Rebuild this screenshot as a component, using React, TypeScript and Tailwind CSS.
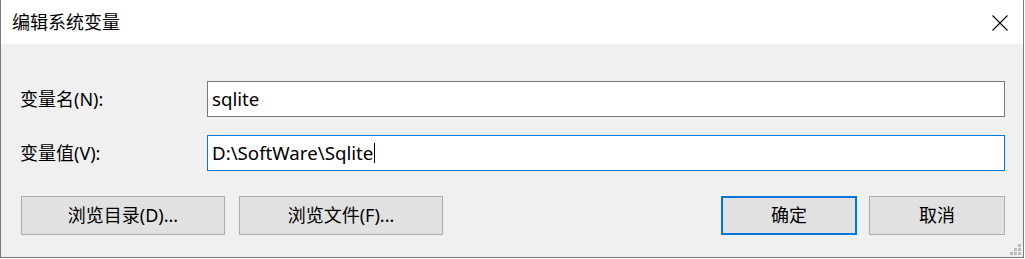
import React from "react";

const font = { fontFamily: '"Segoe UI", "Noto Sans", "Noto Sans CJK SC", sans-serif' };

function Field({ label, value, focused }: { label: string; value: string; focused?: boolean }) {
  return (
    <div className="flex items-center h-[36px]">
      <div className="w-[206px] pl-[19px] text-[18px] text-black leading-none">{label}</div>
      <div
        className={
          "flex-1 h-full bg-white border flex items-center pl-[4px] text-[18.7px] text-black " +
          (focused ? "border-[#0078d7]" : "border-[#7a7a7a]")
        }
      >
        <span className="leading-none">{value}</span>
        {focused ? <span className="w-px h-[20px] bg-black ml-px" /> : null}
      </div>
    </div>
  );
}

function Btn({ children, primary, w }: { children: React.ReactNode; primary?: boolean; w: string }) {
  return (
    <button
      className={
        "h-[39px] bg-[#e1e1e1] text-[18px] text-black flex items-center justify-center " +
        w +
        (primary ? " border-2 border-[#0078d7]" : " border border-[#adadad]")
      }
    >
      {children}
    </button>
  );
}

export default function App() {
  return (
    <div style={font} className="w-[1024px] h-[258px] bg-[#f0f0f0] border-x border-b border-[#7a7a7a] flex flex-col relative">
      <div className="h-[44px] bg-white flex items-center justify-between pl-[11px] pr-[15px]">
        <span className="text-[18px] text-black">编辑系统变量</span>
        <svg width="16" height="16" viewBox="0 0 16 16" className="mt-px">
          <path d="M0.5 0.5 L15.5 15.5 M15.5 0.5 L0.5 15.5" stroke="#000" strokeWidth="1.1" />
        </svg>
      </div>

      <div className="pr-[18px]">
        <div className="mt-[37px]">
          <Field label="变量名(N):" value="sqlite" />
        </div>
        <div className="mt-[18px]">
          <Field label="变量值(V):" value="D:\SoftWare\Sqlite" focused />
        </div>
        <div className="mt-[25px] flex justify-between pl-[20px]">
          <div className="flex gap-[14px]">
            <Btn w="w-[204px]">浏览目录(D)...</Btn>
            <Btn w="w-[204px]">浏览文件(F)...</Btn>
          </div>
          <div className="flex gap-[12px]">
            <Btn w="w-[136px]" primary>
              确定
            </Btn>
            <Btn w="w-[136px]">取消</Btn>
          </div>
        </div>
      </div>

      <svg width="11" height="11" viewBox="0 0 11 11" className="absolute right-[2px] bottom-[2px]">
        <g fill="#bcbcbc">
          <rect x="8" y="0" width="3" height="3" />
          <rect x="4" y="4" width="3" height="3" />
          <rect x="8" y="4" width="3" height="3" />
          <rect x="0" y="8" width="3" height="3" />
          <rect x="4" y="8" width="3" height="3" />
          <rect x="8" y="8" width="3" height="3" />
        </g>
      </svg>
    </div>
  );
}
